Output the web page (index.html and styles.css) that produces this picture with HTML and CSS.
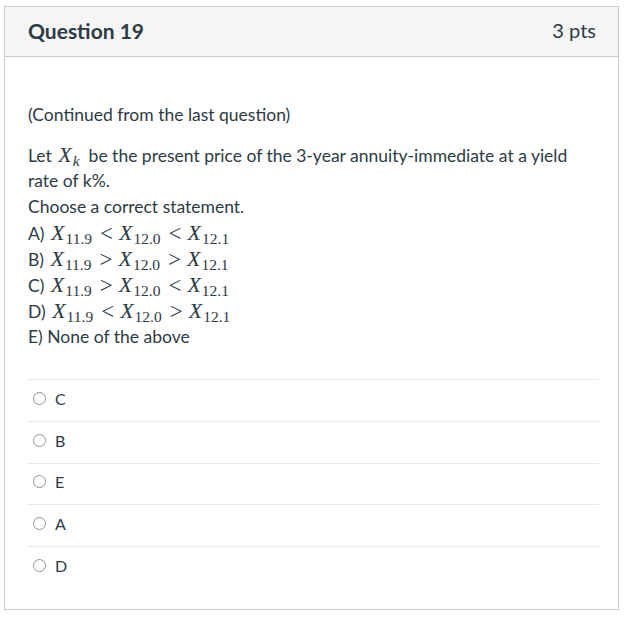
FILE: index.html
```html
<!DOCTYPE html>
<html>
<head>
<meta charset="utf-8">
<link rel="stylesheet" href="styles.css">
</head>
<body>
<div class="page">
  <div class="card">
    <div class="header">
      <span class="title">Question 19</span>
      <span class="pts">3 pts</span>
    </div>
    <div class="body">
      <div class="qtext">
        <p class="intro">(Continued from the last question)</p>
        <div class="line">Let <span class="m"><i>X</i><sub><i>k</i></sub></span>&nbsp; be the present price of the 3-year annuity-immediate at a yield</div>
        <div class="line">rate of k%.</div>
        <div class="line">Choose a correct statement.</div>
        <div class="line">A) <span class="m"><i>X</i><sub>11.9</sub><span class="op">&lt;</span><i>X</i><sub>12.0</sub><span class="op">&lt;</span><i>X</i><sub>12.1</sub></span></div>
        <div class="line">B) <span class="m"><i>X</i><sub>11.9</sub><span class="op">&gt;</span><i>X</i><sub>12.0</sub><span class="op">&gt;</span><i>X</i><sub>12.1</sub></span></div>
        <div class="line">C) <span class="m"><i>X</i><sub>11.9</sub><span class="op">&gt;</span><i>X</i><sub>12.0</sub><span class="op">&lt;</span><i>X</i><sub>12.1</sub></span></div>
        <div class="line">D) <span class="m"><i>X</i><sub>11.9</sub><span class="op">&lt;</span><i>X</i><sub>12.0</sub><span class="op">&gt;</span><i>X</i><sub>12.1</sub></span></div>
        <div class="line">E) None of the above</div>
      </div>
      <div class="answers">
        <div class="ans"><span class="radio"></span><span class="lab">C</span></div>
        <div class="ans"><span class="radio"></span><span class="lab">B</span></div>
        <div class="ans"><span class="radio"></span><span class="lab">E</span></div>
        <div class="ans"><span class="radio"></span><span class="lab">A</span></div>
        <div class="ans"><span class="radio"></span><span class="lab">D</span></div>
      </div>
    </div>
  </div>
</div>
</body>
</html>
```
FILE: styles.css
```css
html, body {
  margin: 0;
  padding: 0;
  background: #ffffff;
}
.page {
  padding: 6px 5px 0 4px;
  font-family: Lato, "Open Sans", sans-serif;
  color: #2d3b45;
}
.card {
  border: 1px solid #c7cdd1;
  height: 604px;
  box-sizing: border-box;
}
.header {
  display: flex;
  justify-content: space-between;
  align-items: center;
  height: 50px;
  box-sizing: border-box;
  padding: 0 22px 3px 23px;
  background: #f5f5f5;
  border-bottom: 1px solid #c7cdd1;
}
.title {
  font-weight: 700;
  font-size: 21px;
  color: #2d3b45;
}
.pts {
  font-weight: 400;
  font-size: 20px;
  color: #2d3b45;
}
.body {
  padding: 0 19px 0 23px;
}
.qtext {
  font-size: 17.5px;
  padding-top: 45px;
}
.intro {
  margin: 0 0 14px 0;
  line-height: 26px;
}
.line {
  line-height: 26px;
  height: 26px;
  white-space: nowrap;
}
.m {
  font-family: "Liberation Serif", "Times New Roman", serif;
  font-size: 22px;
  margin-left: 2px;
}
.m i {
  font-style: italic;
}
.m sub {
  font-size: 15.5px;
  vertical-align: -4px;
  line-height: 0;
  margin-left: 1px;
}
.op {
  font-size: 23px;
  margin: 0 6px 0 8px;
  position: relative;
  top: 1px;
}
.answers {
  margin-top: 29px;
}
.ans {
  display: flex;
  align-items: center;
  height: 41.75px;
  box-sizing: border-box;
  border-top: 1px solid #e6e8ea;
  padding-left: 5px;
  padding-bottom: 4px;
  font-size: 16px;
}
.radio {
  width: 13px;
  height: 13px;
  border: 1px solid #8b969e;
  border-radius: 50%;
  margin-right: 9px;
  box-sizing: border-box;
}
.lab {
  color: #2d3b45;
}
```
